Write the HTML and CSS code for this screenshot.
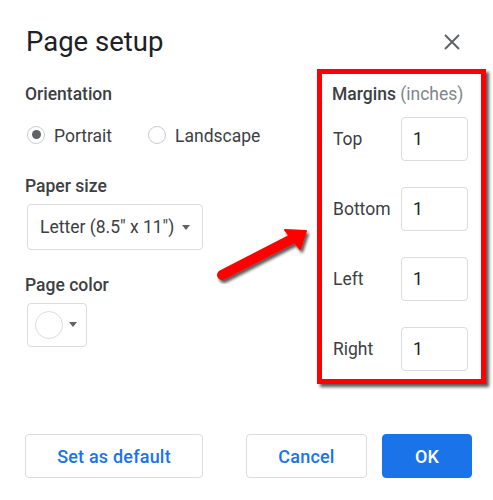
FILE: index.html
```html
<!DOCTYPE html>
<html>
<head>
<meta charset="utf-8">
<link rel="stylesheet" href="styles.css">
</head>
<body>
<div class="dialog">
  <div class="header">
    <h1 class="title">Page setup</h1>
    <span class="close">
      <svg width="24" height="24" viewBox="0 0 24 24"><path d="M5 5 L19 19 M19 5 L5 19" stroke="#5f6368" stroke-width="2" fill="none"/></svg>
    </span>
  </div>
  <div class="main">
    <div class="left">
      <div class="label">Orientation</div>
      <div class="radios">
        <span class="radio checked"><span class="dot"></span></span><span class="rtext">Portrait</span>
        <span class="radio landscape"></span><span class="rtext">Landscape</span>
      </div>
      <div class="label paper">Paper size</div>
      <div class="select">
        <span class="seltext">Letter (8.5" x 11")</span>
        <span class="caret"></span>
      </div>
      <div class="label pcolor">Page color</div>
      <div class="colorbtn">
        <span class="swatch"></span>
        <span class="caret small"></span>
      </div>
    </div>
    <div class="margins">
      <div class="label mlabel">Margins <span class="unit">(inches)</span></div>
      <div class="mgrid">
        <span class="mname">Top</span><span class="minput">1</span>
        <span class="mname">Bottom</span><span class="minput">1</span>
        <span class="mname">Left</span><span class="minput">1</span>
        <span class="mname">Right</span><span class="minput">1</span>
      </div>
    </div>
  </div>
  <div class="footer">
    <button class="btn default">Set as default</button>
    <div class="actions">
      <button class="btn cancel">Cancel</button>
      <button class="btn ok">OK</button>
    </div>
  </div>
  <svg class="arrow" width="493" height="500" viewBox="0 0 493 500">
    <defs>
      <filter id="sh" x="-20%" y="-20%" width="140%" height="140%">
        <feDropShadow dx="2" dy="3" stdDeviation="1.5" flood-color="#000" flood-opacity="0.65"/>
      </filter>
    </defs>
    <g filter="url(#sh)">
      <line x1="222" y1="275" x2="292" y2="239" stroke="#ff0000" stroke-width="10" stroke-linecap="round"/>
      <polygon points="285,230 306,231 300,249" fill="#ff0000" stroke="#ff0000" stroke-width="2" stroke-linejoin="round"/>
    </g>
  </svg>
</div>
</body>
</html>
```
FILE: styles.css
```css
* { box-sizing: border-box; }
html, body {
  margin: 0;
  padding: 0;
  background: #ffffff;
}
body {
  font-family: Roboto, "Liberation Sans", Arial, sans-serif;
  color: #3c4043;
}
.dialog {
  position: relative;
  width: 493px;
  height: 500px;
  padding: 24px 0 0 25px;
}
.header {
  display: flex;
  align-items: center;
  justify-content: space-between;
  height: 36px;
  padding-right: 29px;
}
.title {
  margin: 0 0 0 1px;
  font-size: 27.5px;
  font-weight: 400;
  line-height: 36px;
  color: #202124;
}
.close {
  display: flex;
  width: 24px;
  height: 24px;
}
.main {
  display: flex;
  margin-top: 9px;
}
.left {
  width: 292px;
  padding-top: 15px;
}
.label {
  font-size: 17.5px;
  font-weight: 500;
  line-height: 20px;
  color: #3c4043;
}
.radios {
  display: flex;
  align-items: center;
  height: 20px;
  margin-top: 22px;
  font-size: 17.5px;
  line-height: 20px;
}
.radio {
  width: 18px;
  height: 18px;
  border-radius: 50%;
  border: 1px solid #c9ccd0;
  display: flex;
  align-items: center;
  justify-content: center;
  margin: 0 0 3px 2px;
}
.radio.landscape { margin-left: 36px; }
.dot {
  width: 9px;
  height: 9px;
  border-radius: 50%;
  background: #5f6368;
}
.rtext { margin-left: 9px; }
.paper { margin-top: 30px; }
.select {
  display: flex;
  align-items: center;
  width: 176px;
  height: 46px;
  margin-top: 8px;
  margin-left: 2px;
  padding-left: 12px;
  border: 1px solid #dadce0;
  border-radius: 4px;
  font-size: 17.5px;
}
.caret {
  width: 0;
  height: 0;
  border-left: 4.5px solid transparent;
  border-right: 4.5px solid transparent;
  border-top: 5px solid #5f6368;
  margin-left: 8px;
  margin-top: 1px;
}
.pcolor { margin-top: 25px; }
.colorbtn {
  display: flex;
  align-items: center;
  width: 60px;
  height: 44px;
  margin-top: 8px;
  margin-left: 2px;
  padding-left: 7px;
  border: 1px solid #dadce0;
  border-radius: 4px;
}
.swatch {
  width: 28px;
  height: 28px;
  border-radius: 50%;
  border: 1px solid #dadce0;
}
.caret.small { margin-left: 6px; margin-top: -1px; }
.margins {
  width: 169px;
  height: 315px;
  border: 5px solid #ff0000;
  box-shadow: 3px 3px 3px rgba(0,0,0,0.65);
  padding: 10px 0 0 10px;
}
.unit {
  font-weight: 400;
  color: #80868b;
}
.mgrid {
  display: grid;
  grid-template-columns: 69px 67px;
  grid-auto-rows: 44px;
  row-gap: 26px;
  margin-top: 13px;
  align-items: center;
  font-size: 17.5px;
}
.mname { padding-left: 1px; }
.minput {
  height: 44px;
  border: 1px solid #dadce0;
  border-radius: 4px;
  display: flex;
  align-items: center;
  padding-left: 11px;
  color: #202124;
}
.footer {
  display: flex;
  justify-content: space-between;
  margin-top: 50px;
  padding-right: 21px;
}
.actions {
  display: flex;
  gap: 15px;
}
.btn {
  height: 44px;
  border: 1px solid #dadce0;
  border-radius: 4px;
  background: #ffffff;
  color: #1a73e8;
  font-family: Roboto, "Liberation Sans", Arial, sans-serif;
  font-size: 18px;
  font-weight: 500;
  letter-spacing: 0.2px;
  padding: 0;
}
.default { width: 178px; }
.cancel { width: 121px; }
.ok {
  width: 90px;
  background: #1a73e8;
  border-color: #1a73e8;
  color: #ffffff;
}
.arrow {
  position: absolute;
  left: 0;
  top: 0;
  pointer-events: none;
}
```
